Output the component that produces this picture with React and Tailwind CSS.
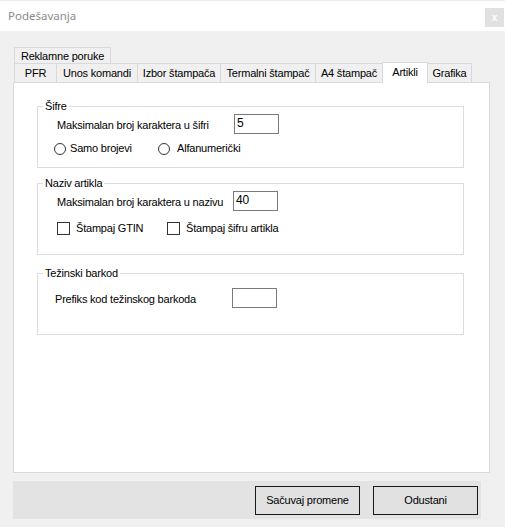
export default function App() {
  const tabBase = "h-[19px] border-t border-l border-[#d9d9d9] bg-[#f0f0f0] flex items-center justify-center leading-none pt-[1px] whitespace-nowrap";
  return (
    <div className="w-[505px] h-[527px] bg-[#f0f0f0] overflow-hidden text-[11px] tracking-[-0.2px] text-black font-['Liberation_Sans',sans-serif]">
      <div className="h-px bg-[#ececec]" />
      <div className="h-[30px] bg-white flex items-center justify-between pl-[8px] pr-px">
        <span className="text-[#8c8c8c] text-[11.5px] tracking-normal font-['Noto_Sans',sans-serif]">Podešavanja</span>
        <div className="w-[19px] h-[19px] mt-[2px] bg-[#e1e1e1] text-white text-[10px] flex items-center justify-center font-bold">x</div>
      </div>

      <div className="pl-[13px] pt-[16px]">
        <div className="pl-px">
          <div className="flex">
            <div className="w-[97px] h-[16px] border-t border-l border-r border-[#d9d9d9] bg-[#f0f0f0] flex items-center justify-center leading-none pt-[2px] whitespace-nowrap">Reklamne poruke</div>
          </div>
          <div className="flex h-[19px] items-start">
            <div className={`${tabBase} w-[42px]`}>PFR</div>
            <div className={`${tabBase} w-[81px]`}>Unos komandi</div>
            <div className={`${tabBase} w-[83px]`}>Izbor štampača</div>
            <div className={`${tabBase} w-[95px]`}>Termalni štampač</div>
            <div className={`${tabBase} w-[67px]`}>A4 štampač</div>
            <div className="w-[46px] h-[21px] -mt-px relative z-10 bg-white border-t border-l border-r border-[#d9d9d9] flex items-start justify-center leading-none pt-[4px] whitespace-nowrap">Artikli</div>
            <div className={`${tabBase} w-[45px] -ml-px border-r`}>Grafika</div>
          </div>
        </div>

        <div className="w-[477px] h-[391px] bg-white border border-[#d9d9d9] pl-[23px] pt-[17px]">
          <fieldset className="w-[427px] border border-[#dcdcdc]">
            <legend className="ml-[5px] px-[2px] leading-[13px]">Šifre</legend>
            <div className="pt-px pb-[12px]">
              <div className="flex items-center h-[20px] pl-[19px]">
                <span className="w-[177px] leading-none pt-[2px]">Maksimalan broj karaktera u šifri</span>
                <div className="w-[45px] h-[20px] border border-[#7a7a7a] pl-[2px] text-[12px] leading-[16px]">5</div>
              </div>
              <div className="flex items-center h-[13px] mt-[8px] pl-[16px]">
                <div className="flex items-center w-[104px]">
                  <span className="w-[12px] h-[12px] rounded-full border border-[#333] bg-white" />
                  <span className="ml-[4px] leading-none">Samo brojevi</span>
                </div>
                <div className="flex items-center">
                  <span className="w-[12px] h-[12px] rounded-full border border-[#333] bg-white" />
                  <span className="ml-[7px] leading-none">Alfanumerički</span>
                </div>
              </div>
            </div>
          </fieldset>

          <fieldset className="w-[427px] border border-[#dcdcdc] mt-[9px]">
            <legend className="ml-[5px] px-[2px] leading-[13px]">Naziv artikla</legend>
            <div className="pt-[1px] pb-[19px]">
              <div className="flex items-center h-[20px] pl-[19px]">
                <span className="w-[176px] leading-none pt-[2px]">Maksimalan broj karaktera u nazivu</span>
                <div className="w-[45px] h-[20px] border border-[#7a7a7a] pl-[2px] text-[12px] leading-[16px]">40</div>
              </div>
              <div className="flex items-center h-[13px] mt-[11px] pl-[19px]">
                <div className="flex items-center w-[110px]">
                  <span className="w-[13px] h-[13px] border border-[#333] bg-white" />
                  <span className="ml-[6px] leading-none">Štampaj GTIN</span>
                </div>
                <div className="flex items-center">
                  <span className="w-[13px] h-[13px] border border-[#333] bg-white" />
                  <span className="ml-[6px] leading-none">Štampaj šifru artikla</span>
                </div>
              </div>
            </div>
          </fieldset>

          <fieldset className="w-[427px] border border-[#dcdcdc] mt-[12px]">
            <legend className="ml-[5px] px-[2px] leading-[13px]">Težinski barkod</legend>
            <div className="pt-[8px] pb-[26px]">
              <div className="flex items-center h-[20px] pl-[17px]">
                <span className="w-[177px] leading-none pt-[2px]">Prefiks kod težinskog barkoda</span>
                <div className="w-[45px] h-[20px] border border-[#7a7a7a]" />
              </div>
            </div>
          </fieldset>
        </div>

        <div className="w-[468px] h-[38px] mt-[8px] bg-[#e3e3e3] flex justify-end items-start pt-[5px] pr-[3px] gap-[13px]">
          <button className="w-[105px] h-[29px] border border-[#1a1a1a] bg-[#e1e1e1] flex items-center justify-center leading-none">Sačuvaj promene</button>
          <button className="w-[105px] h-[29px] border border-[#1a1a1a] bg-[#e1e1e1] flex items-center justify-center leading-none">Odustani</button>
        </div>
      </div>
    </div>
  );
}
